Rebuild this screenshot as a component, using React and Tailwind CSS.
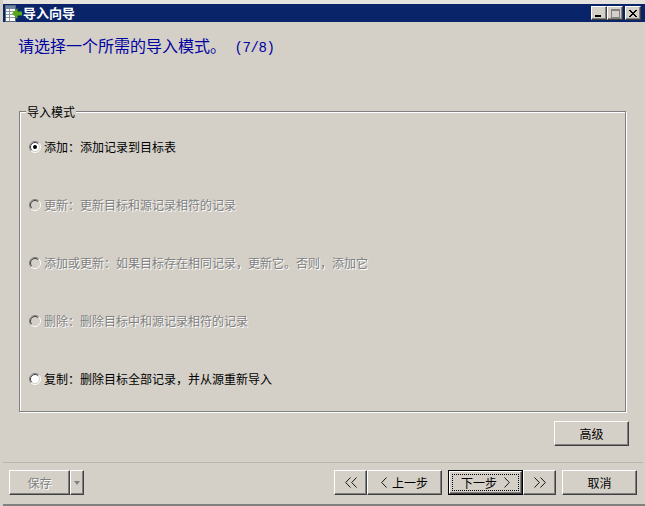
const FONT = 'font-["Noto_Sans_CJK_SC","Liberation_Sans",sans-serif]'

function Radio({ checked, disabled }) {
  return (
    <svg width="12" height="12" viewBox="0 0 12 12" className="shrink-0">
      <circle cx="6" cy="6" r="5" fill={disabled ? '#d4d0c8' : '#fff'} />
      <path d="M2.1 9.9A5.5 5.5 0 0 1 9.9 2.1" fill="none" stroke="#808080" strokeWidth="1" />
      <path d="M2.8 9.2A4.5 4.5 0 0 1 9.2 2.8" fill="none" stroke="#404040" strokeWidth="1" />
      <path d="M9.9 2.1A5.5 5.5 0 0 1 2.1 9.9" fill="none" stroke="#fff" strokeWidth="1" />
      <path d="M9.2 2.8A4.5 4.5 0 0 1 2.8 9.2" fill="none" stroke="#d4d0c8" strokeWidth="1" />
      {checked && <circle cx="6" cy="6" r="2" fill="#000" />}
    </svg>
  )
}

function Option({ label, disabled, checked }) {
  return (
    <div className="h-[58px] flex items-start pl-[9px]">
      <div className="flex items-center gap-[3px] h-[16px] mt-[1px]">
        <Radio checked={checked} disabled={disabled} />
        <span className={'text-[12px] leading-[16px] whitespace-nowrap ' + (disabled ? 'text-[#808080] [text-shadow:1px_1px_0_#fff]' : 'text-black')}>{label}</span>
      </div>
    </div>
  )
}

function Btn({ children, className = '', disabled, def }) {
  return (
    <div className={(def ? 'border border-black ' : '') + 'h-[25px] flex ' + className}>
      <div className={'flex-1 flex items-center justify-center border-t border-l border-t-white border-l-white border-r border-b border-r-[#404040] border-b-[#404040] shadow-[inset_-1px_-1px_0_#808080] text-[12px] whitespace-nowrap ' + (disabled ? 'text-[#808080] [text-shadow:1px_1px_0_#fff]' : 'text-black')}>
        {children}
      </div>
    </div>
  )
}

function Chevron({ dir }) {
  return (
    <svg width="6" height="11" viewBox="0 0 6 11" className="shrink-0">
      <path d={dir === 'left' ? 'M5.5 0.5L0.7 5.5L5.5 10.5' : 'M0.5 0.5L5.3 5.5L0.5 10.5'} fill="none" stroke="#000" strokeWidth="0.9" />
    </svg>
  )
}

export default function App() {
  return (
    <div className={'w-[645px] h-[506px] bg-[#d4d0c8] flex flex-col overflow-hidden border-l-[3px] border-l-[#d4d0c8] ' + FONT}>
      <div className="h-[4px] bg-[#e6e3de] -ml-[3px]" />
      <div className="h-[18px] bg-[#0a246a] flex items-center text-white">
        <svg width="17" height="17" viewBox="0 0 17 17" className="shrink-0 ml-[2px]">
          <rect x="0.5" y="0.5" width="10" height="16" fill="#fff" stroke="#5a6a7a" />
          <rect x="1" y="1" width="9" height="3" fill="#6d87a8" />
          <path d="M1 6.5h9M1 9.5h9M1 12.5h9M4.5 4v12" stroke="#8a96a2" />
          <path d="M7 8.5l5.5-5.5v3.5H17v4h-4.5V14z" fill="#58a81c" />
        </svg>
        <span className="ml-px text-[13px] font-bold leading-none -mt-px">导入向导</span>
        <div className="ml-auto mr-[4px] flex">
          {['min', 'max', 'close'].map((k) => (
            <div key={k} className={'w-[16px] h-[14px] bg-[#d4d0c8] border-t border-l border-white border-r border-b border-r-[#404040] border-b-[#404040] shadow-[inset_-1px_-1px_0_#808080] flex items-center justify-center ' + (k === 'close' ? 'ml-[2px]' : '')}>
              {k === 'min' && <div className="w-[6px] h-[2px] bg-black mt-[6px] -ml-[2px]" />}
              {k === 'max' && <div className="w-[9px] h-[9px] border border-[#808080] border-t-2" />}
              {k === 'close' && (
                <svg width="8" height="7" viewBox="0 0 8 7"><path d="M0 0l7 7M1 0l7 7M7 0L0 7M8 0L1 7" stroke="#000" /></svg>
              )}
            </div>
          ))}
        </div>
      </div>

      <div className="pl-[15px] pt-[12px] h-[89px] text-[16px] leading-[22px] text-[#0000a0] whitespace-nowrap">
        请选择一个所需的导入模式。 <span className="font-['Liberation_Mono'] text-[14px] tracking-[-0.4px] ml-[5px]">(7/8)</span>
      </div>

      <div className="relative ml-[16px] w-[607px] h-[301px] border border-[#808080] shadow-[inset_1px_1px_0_#fff,1px_1px_0_#fff]">
        <span className="absolute left-[6px] -top-[8px] bg-[#d4d0c8] px-[1px] text-[12px] leading-[16px] text-black">导入模式</span>
        <div className="pt-[26px]">
          <Option checked label="添加：添加记录到目标表" />
          <Option disabled label="更新：更新目标和源记录相符的记录" />
          <Option disabled label="添加或更新：如果目标存在相同记录，更新它。否则，添加它" />
          <Option disabled label="删除：删除目标中和源记录相符的记录" />
          <Option label="复制：删除目标全部记录，并从源重新导入" />
        </div>
      </div>

      <div className="flex justify-end pr-[16px] mt-[9px]">
        <Btn className="w-[75px]">高级</Btn>
      </div>

      <div className="mt-[16px] mr-[2px] h-px bg-[#b8b4aa]" />

      <div className="flex items-center mt-[7px] pl-[6px] pr-[8px]">
        <Btn disabled className="w-[61px]">保存</Btn>
        <Btn disabled className="w-[14px]"><span className="w-0 h-0 border-x-[3px] border-x-transparent border-t-[4px] border-t-[#808080]" /></Btn>
        <div className="flex-1" />
        <Btn className="w-[33px]"><Chevron dir="left" /><Chevron dir="left" /></Btn>
        <Btn className="w-[75px]"><span className="flex items-center gap-[5px]"><Chevron dir="left" />上一步</span></Btn>
        <div className="w-[6px]" />
        <Btn def className="w-[75px]">
          <span className="flex-1 self-stretch m-[2px] border border-dotted border-black flex items-center justify-center gap-[7px]">下一步<Chevron dir="right" /></span>
        </Btn>
        <Btn className="w-[33px]"><Chevron dir="right" /><Chevron dir="right" /></Btn>
        <div className="w-[6px]" />
        <Btn className="w-[75px]">取消</Btn>
      </div>
      <div className="mt-auto h-[2px] bg-[#808080] -ml-[3px]" />
    </div>
  )
}
